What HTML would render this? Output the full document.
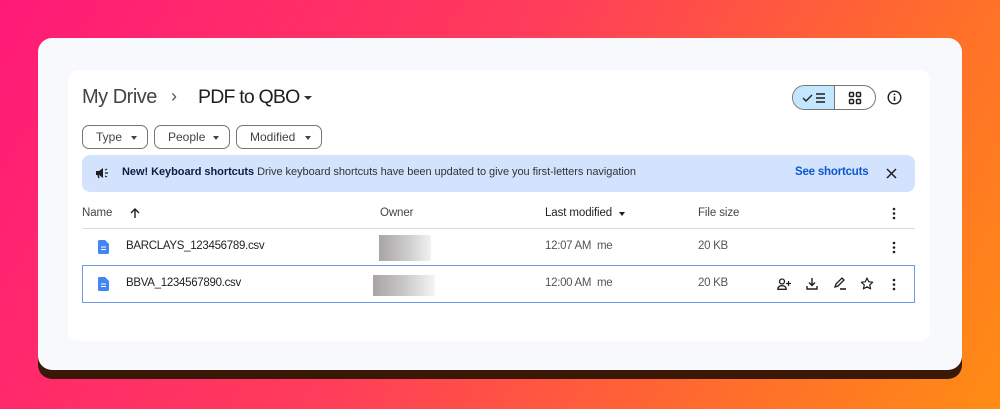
<!DOCTYPE html>
<html><head><style>
*{margin:0;padding:0;box-sizing:border-box}
body{width:1000px;height:409px;overflow:hidden;background:linear-gradient(120deg,#ff1a78 0%,#ff3d5a 45%,#ff6a2e 75%,#ff8c14 100%);font-family:"Liberation Sans",sans-serif;position:relative;color:#1f1f1f}
.shadow{position:absolute;left:38px;top:46px;width:924px;height:333px;background:#3a1808;border-radius:14px}
.card{position:absolute;left:38px;top:38px;width:924px;height:332px;background:#f8f9fc;border-radius:14px}
.panel{position:absolute;left:68px;top:70px;width:862px;height:271px;background:#fff;border-radius:10px}
.a{position:absolute;white-space:nowrap}
.chip{position:absolute;top:125px;height:24px;border:1px solid #747775;border-radius:7px;font-size:12px;color:#444;line-height:22px;padding-left:13px}
.chip:after{content:"";position:absolute;right:10px;top:10px;border:3.5px solid transparent;border-top:4px solid #444}
.hd{font-size:11.5px;color:#444;top:207px;letter-spacing:-0.1px}
.cell{font-size:11.5px;color:#555;letter-spacing:-0.3px}
</style></head><body>
<div class="shadow"></div>
<div class="card"></div>
<div class="panel"></div>
<div class="a" style="left:82px;top:86px;font-size:20px;color:#444;letter-spacing:-0.5px">My Drive</div>
<div class="a" style="left:171px;top:86px;font-size:18px;color:#555">›</div>
<div class="a" style="left:198px;top:86px;font-size:19.5px;color:#1f1f1f;letter-spacing:-0.8px">PDF to QBO</div>
<div class="a" style="left:304px;top:96px;border:4px solid transparent;border-top:4.5px solid #333"></div>
<div class="a" style="left:792px;top:85px;width:84px;height:25px;border:1px solid #747775;border-radius:13px;overflow:hidden">
 <div style="position:absolute;left:0;top:0;width:42px;height:25px;background:#c2e7ff;border-right:1px solid #747775"></div>
 <svg style="position:absolute;left:9px;top:5px" width="28" height="14" viewBox="0 0 28 14"><path d="M1 7l3 3 6-6" fill="none" stroke="#1f1f1f" stroke-width="1.4"/><path d="M14 3h9M14 7h9M14 11h9" stroke="#1f1f1f" stroke-width="1.5"/></svg>
 <svg style="position:absolute;left:55px;top:5px" width="14" height="14" viewBox="0 0 14 14"><g fill="none" stroke="#1f1f1f" stroke-width="1.5"><rect x="1.5" y="1.5" width="4" height="4" rx="1"/><rect x="8.5" y="1.5" width="4" height="4" rx="1"/><rect x="1.5" y="8.5" width="4" height="4" rx="1"/><rect x="8.5" y="8.5" width="4" height="4" rx="1"/></g></svg>
</div>
<svg class="a" style="left:887px;top:90px" width="15" height="15" viewBox="0 0 15 15"><circle cx="7.5" cy="7.5" r="6.3" fill="none" stroke="#1f1f1f" stroke-width="1.4"/><path d="M7.5 6.5v4.5" stroke="#1f1f1f" stroke-width="1.5"/><circle cx="7.5" cy="4.4" r="0.9" fill="#1f1f1f"/></svg>
<div class="chip" style="left:82px;width:66px">Type</div>
<div class="chip" style="left:154px;width:76px">People</div>
<div class="chip" style="left:236px;width:86px">Modified</div>
<div class="a" style="left:82px;top:155px;width:833px;height:37px;background:#d3e3fd;border-radius:8px"></div>
<svg class="a" style="left:95px;top:167px" width="14" height="12" viewBox="0 0 14 12"><path d="M1 4h3l4-3v10L4 8H1z" fill="#1f1f1f"/><path d="M3 8l1 3" stroke="#1f1f1f" stroke-width="1.4"/><path d="M10 3l2-1M10 6h3M10 9l2 1" stroke="#1f1f1f" stroke-width="1.2"/></svg>
<div class="a" style="left:122px;top:166px;font-size:11px;color:#1f1f1f;letter-spacing:-0.05px"><b style="color:#0b1f44;font-weight:bold">New! Keyboard shortcuts</b> <span style="color:#333">Drive keyboard shortcuts have been updated to give you first-letters navigation</span></div>
<div class="a" style="left:795px;top:166px;font-size:11.5px;color:#0b57d0;font-weight:bold;letter-spacing:-0.2px">See shortcuts</div>
<svg class="a" style="left:886px;top:168px" width="11" height="11" viewBox="0 0 11 11"><path d="M1 1l9 9M10 1l-9 9" stroke="#1f1f1f" stroke-width="1.5"/></svg>
<div class="a hd" style="left:82px">Name</div>
<svg class="a" style="left:129px;top:207px" width="12" height="12" viewBox="0 0 12 12"><path d="M6 11V2M2 6l4-4 4 4" fill="none" stroke="#1f1f1f" stroke-width="1.4"/></svg>
<div class="a hd" style="left:380px">Owner</div>
<div class="a hd" style="left:545px;color:#1f1f1f">Last modified</div>
<div class="a" style="left:619px;top:212px;border:3.5px solid transparent;border-top:4px solid #1f1f1f"></div>
<div class="a hd" style="left:698px">File size</div>
<div class="a" style="left:82px;top:228px;width:833px;height:1px;background:#dadce0"></div>
<div class="a" style="left:82px;top:265px;width:833px;height:38px;border:1px solid #6b9be8"></div>
<svg class="a" style="left:98px;top:240px" width="11" height="14" viewBox="0 0 11 14"><path d="M1.5 0H7l4 4v8.5A1.5 1.5 0 0 1 9.5 14h-8A1.5 1.5 0 0 1 0 12.5v-11A1.5 1.5 0 0 1 1.5 0z" fill="#4285f4"/><path d="M3 7h5M3 9.5h5" stroke="#fff" stroke-width="1"/></svg>
<svg class="a" style="left:98px;top:277px" width="11" height="14" viewBox="0 0 11 14"><path d="M1.5 0H7l4 4v8.5A1.5 1.5 0 0 1 9.5 14h-8A1.5 1.5 0 0 1 0 12.5v-11A1.5 1.5 0 0 1 1.5 0z" fill="#4285f4"/><path d="M3 7h5M3 9.5h5" stroke="#fff" stroke-width="1"/></svg>
<div class="a cell" style="left:126px;top:240px;color:#1f1f1f">BARCLAYS_123456789.csv</div>
<div class="a cell" style="left:126px;top:277px;color:#1f1f1f">BBVA_1234567890.csv</div>
<div class="a" style="left:379px;top:235px;width:52px;height:26px;background:linear-gradient(90deg,#a9a4a4,#ccc 55%,#f2f2f2)"></div>
<div class="a" style="left:373px;top:275px;width:62px;height:21px;background:linear-gradient(90deg,#a9a4a4,#c9c7c7 50%,#f6f6f6)"></div>
<div class="a cell" style="left:545px;top:240px">12:07 AM&nbsp; me</div>
<div class="a cell" style="left:545px;top:277px">12:00 AM&nbsp; me</div>
<div class="a cell" style="left:698px;top:240px">20 KB</div>
<div class="a cell" style="left:698px;top:277px">20 KB</div>
<svg class="a" style="left:891px;top:207px" width="6" height="13"><circle cx="3" cy="2" r="1.3" fill="#1f1f1f"/><circle cx="3" cy="6.5" r="1.3" fill="#1f1f1f"/><circle cx="3" cy="11" r="1.3" fill="#1f1f1f"/></svg>
<svg class="a" style="left:891px;top:241px" width="6" height="13"><circle cx="3" cy="2" r="1.3" fill="#1f1f1f"/><circle cx="3" cy="6.5" r="1.3" fill="#1f1f1f"/><circle cx="3" cy="11" r="1.3" fill="#1f1f1f"/></svg>
<svg class="a" style="left:891px;top:278px" width="6" height="13"><circle cx="3" cy="2" r="1.3" fill="#1f1f1f"/><circle cx="3" cy="6.5" r="1.3" fill="#1f1f1f"/><circle cx="3" cy="11" r="1.3" fill="#1f1f1f"/></svg>
<svg class="a" style="left:777px;top:278px" width="14" height="12" viewBox="0 0 14 12"><circle cx="5" cy="3.5" r="2.5" fill="none" stroke="#1f1f1f" stroke-width="1.3"/><path d="M0.8 11.3c0-2.5 2-3.6 4.2-3.6s4.2 1.1 4.2 3.6z" fill="none" stroke="#1f1f1f" stroke-width="1.3"/><path d="M11.5 3v5M9 5.5h5" stroke="#1f1f1f" stroke-width="1.2"/></svg>
<svg class="a" style="left:806px;top:277px" width="12" height="13" viewBox="0 0 12 13"><path d="M6 1v7M3 5.5L6 8.5l3-3" fill="none" stroke="#1f1f1f" stroke-width="1.4"/><path d="M1 9v3h10V9" fill="none" stroke="#1f1f1f" stroke-width="1.4"/></svg>
<svg class="a" style="left:833px;top:277px" width="14" height="13" viewBox="0 0 14 13"><path d="M2 10l1-3 6-6 2 2-6 6z" fill="none" stroke="#1f1f1f" stroke-width="1.3"/><path d="M7 12h6" stroke="#1f1f1f" stroke-width="1.6"/></svg>
<svg class="a" style="left:860px;top:277px" width="14" height="13" viewBox="0 0 14 13"><path d="M7 1l1.7 3.8 4 .4-3 2.7.9 4L7 9.8 3.4 11.9l.9-4-3-2.7 4-.4z" fill="none" stroke="#1f1f1f" stroke-width="1.2" stroke-linejoin="round"/></svg>
</body></html>
